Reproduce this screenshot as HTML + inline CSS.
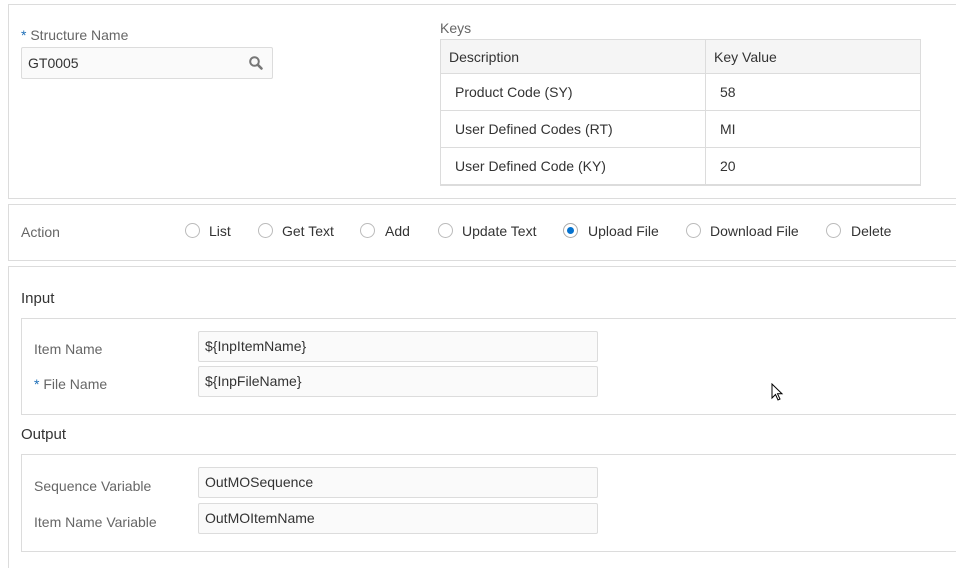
<!DOCTYPE html>
<html style="overflow:hidden"><head><style>
html,body{margin:0;width:956px;height:568px;overflow:hidden}
body{background:#fff;font-family:"Liberation Sans",sans-serif;color:#333;position:relative;font-size:14px}
.a{position:absolute}
.panel{position:absolute;left:8px;right:0;border:1px solid #dcdcdc;border-right:none;background:#fff;box-sizing:border-box}
.lbl{color:#666;font-size:14px}
.star{color:#1e6fb8}
.inp{position:absolute;background:#fafafa;border:1px solid #dcdcdc;border-radius:2px;box-sizing:border-box;font-size:14px;color:#333;padding-left:6px}
table{border-collapse:collapse;position:absolute;left:440px;top:39px;width:481px;font-size:14px}
td{border:1px solid #dcdcdc;height:36px;padding:0;color:#333}
th{border:1px solid #dcdcdc;height:34px;box-sizing:border-box;background:#f5f5f5;font-weight:normal;text-align:left;padding-left:8px}
.r{position:absolute;top:223px;width:15px;height:15px;border:1px solid #bbb;border-radius:50%;box-sizing:border-box;background:#fff}
.rt{position:absolute;top:223px;font-size:14px;color:#333}
</style></head><body>
<div class="panel" style="top:4px;height:195px"></div>
<div class="panel" style="top:204px;height:57px"></div>
<div class="panel" style="top:266px;height:302px;border-bottom:none"></div>

<div class="a lbl" style="left:21px;top:27px"><span class="star">*</span> Structure Name</div>
<div class="inp" style="left:21px;top:47px;width:252px;height:32px;line-height:30px">GT0005
<svg class="a" style="left:226px;top:7px" width="16" height="16" viewBox="0 0 16 16"><circle cx="6.5" cy="6.5" r="4.3" fill="none" stroke="#777" stroke-width="2"/><line x1="9.8" y1="9.8" x2="13.5" y2="13.5" stroke="#777" stroke-width="2.6" stroke-linecap="round"/></svg></div>

<div class="a lbl" style="left:440px;top:20px">Keys</div>
<table>
<tr><th style="width:265px">Description</th><th>Key Value</th></tr>
<tr><td style="padding-left:14px">Product Code (SY)</td><td style="padding-left:14px">58</td></tr>
<tr><td style="padding-left:14px">User Defined Codes (RT)</td><td style="padding-left:14px">MI</td></tr>
<tr><td style="padding-left:14px;border-bottom:2px solid #dcdcdc">User Defined Code (KY)</td><td style="padding-left:14px;border-bottom:2px solid #dcdcdc">20</td></tr>
</table>

<div class="a lbl" style="left:21px;top:224px">Action</div>
<div class="r" style="left:185px"></div><div class="rt" style="left:209px">List</div>
<div class="r" style="left:258px"></div><div class="rt" style="left:282px">Get Text</div>
<div class="r" style="left:360px"></div><div class="rt" style="left:385px">Add</div>
<div class="r" style="left:438px"></div><div class="rt" style="left:462px">Update Text</div>
<div class="r" style="left:563px;border-color:#aaa"><div class="a" style="left:3px;top:3px;width:7px;height:7px;border-radius:50%;background:#0572ce"></div></div><div class="rt" style="left:588px">Upload File</div>
<div class="r" style="left:686px"></div><div class="rt" style="left:710px">Download File</div>
<div class="r" style="left:826px"></div><div class="rt" style="left:851px">Delete</div>

<div class="a" style="left:21px;top:290px;font-size:15px;color:#333">Input</div>
<div class="a" style="left:21px;top:318px;width:935px;height:97px;border:1px solid #dcdcdc;border-right:none;box-sizing:border-box"></div>
<div class="a lbl" style="left:34px;top:341px">Item Name</div>
<div class="a lbl" style="left:34px;top:376px"><span class="star">*</span> File Name</div>
<div class="inp" style="left:198px;top:331px;width:400px;height:31px;line-height:29px">${InpItemName}</div>
<div class="inp" style="left:198px;top:366px;width:400px;height:31px;line-height:29px">${InpFileName}</div>

<div class="a" style="left:21px;top:426px;font-size:15px;color:#333">Output</div>
<div class="a" style="left:21px;top:454px;width:935px;height:98px;border:1px solid #dcdcdc;border-right:none;box-sizing:border-box"></div>
<div class="a lbl" style="left:34px;top:478px">Sequence Variable</div>
<div class="a lbl" style="left:34px;top:514px">Item Name Variable</div>
<div class="inp" style="left:198px;top:467px;width:400px;height:31px;line-height:29px">OutMOSequence</div>
<div class="inp" style="left:198px;top:503px;width:400px;height:31px;line-height:29px">OutMOItemName</div>

<svg class="a" style="left:771px;top:383px" width="13" height="19" viewBox="0 0 13 19"><path d="M1 1 L1 15 L4.5 11.5 L7 17 L9 16 L6.5 10.8 L11 10.8 Z" fill="#fff" stroke="#000" stroke-width="1"/></svg>
</body></html>
